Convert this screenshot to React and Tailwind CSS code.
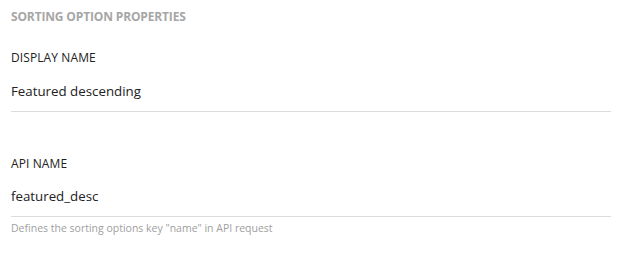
export default function App() {
  return (
    <div className="min-h-[257px] bg-white px-[11px] pt-[9px] font-['Open_Sans',sans-serif]">
      <div className="w-[600px]">
        <h3 className="text-[12px] font-bold leading-[16px] tracking-[-0.15px] text-[#a6a6a6]">SORTING OPTION PROPERTIES</h3>

        <div className="mt-[25px]">
          <label className="block text-[12px] leading-[16px] tracking-[0.1px] text-[#222]">DISPLAY NAME</label>
          <div className="mt-[16px] border-b border-[#dcdcdc] pb-[10px] text-[13.3px] leading-[19px] text-[#222]">
            Featured descending
          </div>
        </div>

        <div className="mt-[44px]">
          <label className="block text-[12px] leading-[16px] tracking-[0.1px] text-[#222]">API NAME</label>
          <div className="mt-[15px] border-b border-[#dcdcdc] pb-[10px] text-[13.3px] leading-[19px] text-[#222]">
            featured_desc
          </div>
          <p className="mt-[4px] text-[10.5px] leading-[14px] text-[#a0a0a0]">
            Defines the sorting options key "name" in API request
          </p>
        </div>
      </div>
    </div>
  );
}
